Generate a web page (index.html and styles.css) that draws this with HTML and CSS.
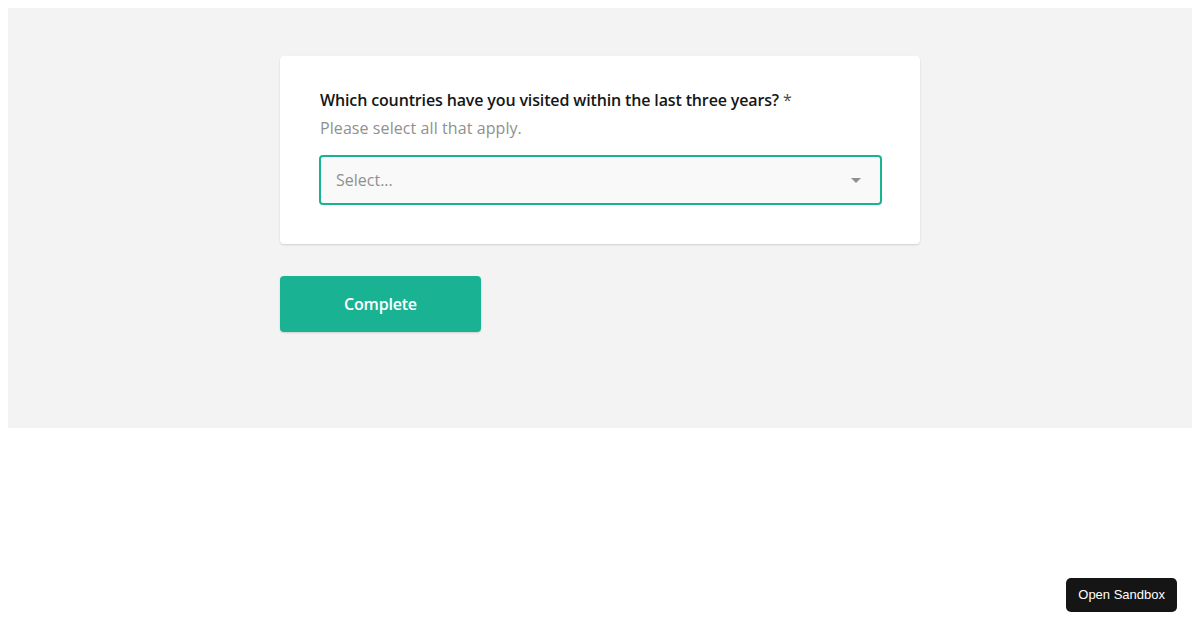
FILE: index.html
```html
<!DOCTYPE html>
<html lang="en">
<head>
  <meta charset="UTF-8" />
  <meta name="viewport" content="width=device-width, initial-scale=1.0"/>
  <title>Survey</title>
  <link rel="stylesheet" href="styles.css">
</head>
<body>
  <div class="survey">
    <div class="survey-body">
      <div class="question">
        <div class="question-title">
          Which countries have you visited within the last three years? <span class="required">*</span>
        </div>
        <div class="question-desc">Please select all that apply.</div>
        <div class="dropdown">
          <span class="placeholder">Select...</span>
          <svg class="chevron" width="10" height="5" viewBox="0 0 10 5">
            <path d="M0 0 L10 0 L5 5 Z" fill="#909090" />
          </svg>
        </div>
      </div>
      <div class="nav">
        <button class="complete-btn">Complete</button>
      </div>
    </div>
  </div>

  <a class="sandbox-btn">Open Sandbox</a>
</body>
</html>
```

FILE: styles.css
```css
html, body {
  margin: 0;
  padding: 0;
}

body {
  padding: 8px;
  background: #fff;
  font-family: "Open Sans", sans-serif;
}

.survey {
  background: #f3f3f3;
  height: 420px;
  box-sizing: border-box;
  padding-top: 48px;
}

.survey-body {
  width: 640px;
  margin: 0 auto;
}

.question {
  background: #fff;
  border-radius: 4px;
  box-shadow: 0 1px 2px rgba(0, 0, 0, 0.15);
  padding: 32px 39px 39px 40px;
}

.question-title {
  font-size: 16px;
  line-height: 24px;
  font-weight: 600;
  letter-spacing: -0.14px;
  color: #161616;
}

.required {
  font-weight: 400;
  letter-spacing: 0;
  color: #4a4a4a;
}

.question-desc {
  font-size: 16px;
  line-height: 24px;
  letter-spacing: 0.08px;
  color: #909090;
  margin-top: 4px;
}

.dropdown {
  margin: 15px -1px 0 -1px;
  height: 50px;
  box-sizing: border-box;
  border: 2px solid #19b394;
  border-radius: 4px;
  background: #f9f9f9;
  display: flex;
  align-items: center;
  justify-content: space-between;
  padding: 0 19px 0 15px;
}

.placeholder {
  font-size: 16px;
  color: #909090;
}

.chevron {
  display: block;
}

.nav {
  margin-top: 32px;
}

.complete-btn {
  width: 201px;
  height: 56px;
  border: none;
  border-radius: 4px;
  background: #19b394;
  color: #fff;
  font-family: "Open Sans", sans-serif;
  font-size: 16px;
  font-weight: 600;
  letter-spacing: -0.2px;
  box-shadow: 0 1px 2px rgba(0, 0, 0, 0.15);
  cursor: pointer;
}

.sandbox-btn {
  position: fixed;
  right: 23px;
  bottom: 18px;
  background: #151515;
  color: #fff;
  font-family: "Liberation Sans", Arial, sans-serif;
  font-size: 13px;
  line-height: 34px;
  padding: 0 12px;
  border-radius: 5px;
}
```
